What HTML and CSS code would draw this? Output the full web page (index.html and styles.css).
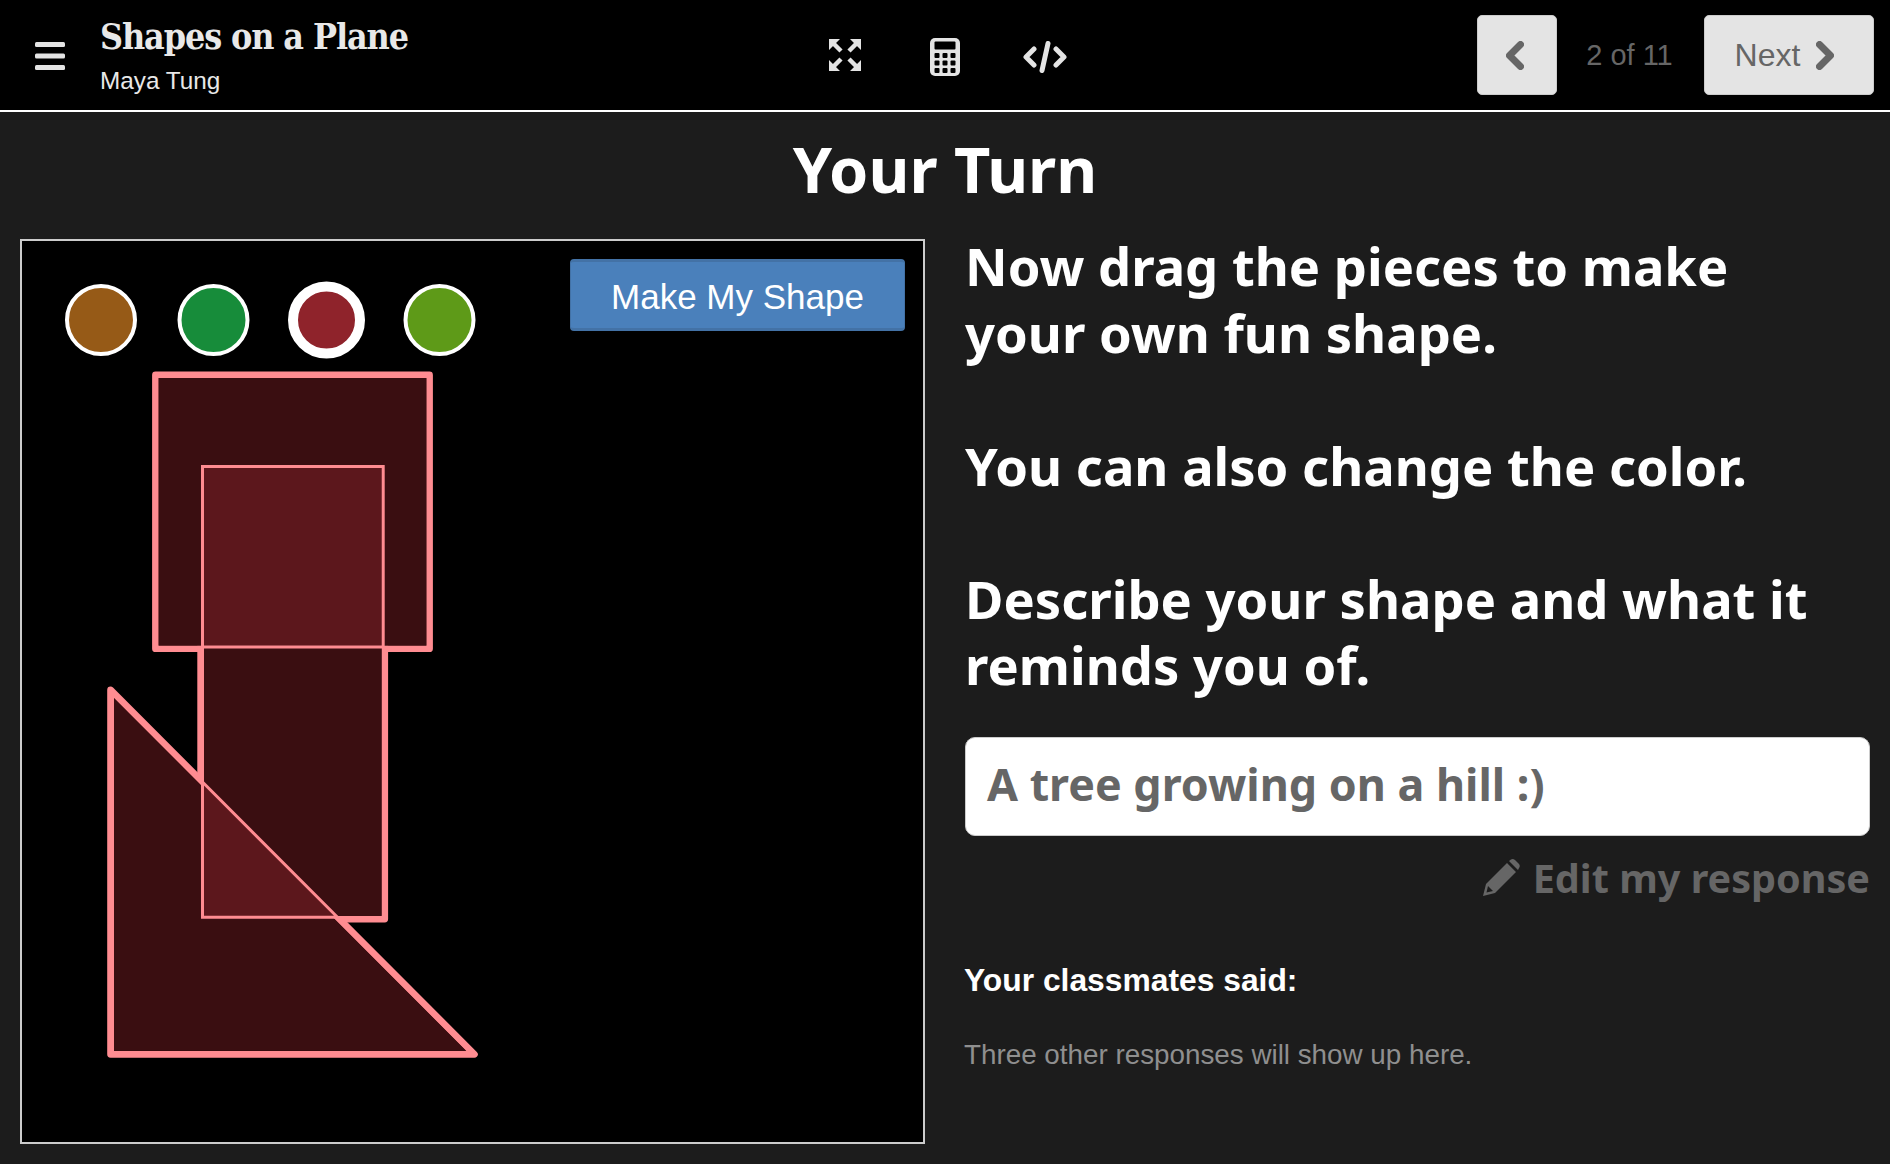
FILE: index.html
```html
<!DOCTYPE html>
<html lang="en">
<head>
    <meta charset="UTF-8">
    <meta name="viewport" content="width=device-width, initial-scale=1.0">
    <title>Shapes on a Plane</title>
    <link rel="stylesheet" href="styles.css">
</head>
<body>
    <header class="topbar">
        <div class="topbar-left">
            <svg class="menu-icon" viewBox="0 0 30 28"><rect y="0" width="30" height="5" rx="1.5"/><rect y="11.500" width="30" height="5" rx="1.5"/><rect y="23" width="30" height="5" rx="1.5"/></svg>
            <div class="lesson">
                <div class="lesson-title">Shapes on a Plane</div>
                <div class="lesson-student">Maya Tung</div>
            </div>
        </div>
        <div class="tools">
            <svg class="tool-expand" viewBox="0 0 32 32">
                <path d="M0 0H11L0 11ZM32 0H21L32 11ZM0 32H11L0 21ZM32 32H21L32 21Z"/>
                <path class="arrow-stem" d="M4 4L12 12M28 4L20 12M4 28L12 20M28 28L20 20"/>
            </svg>
            <svg class="tool-calc" viewBox="0 0 30 38">
                <rect width="30" height="38" rx="5"/>
                <g class="calc-holes">
                    <rect x="4.500" y="3.500" width="21" height="8" rx="1"/>
                    <rect x="4.500" y="15" width="5" height="5" rx="1"/><rect x="12.500" y="15" width="5" height="5" rx="1"/><rect x="20.500" y="15" width="5" height="5" rx="1"/>
                    <rect x="4.500" y="22.500" width="5" height="5" rx="1"/><rect x="12.500" y="22.500" width="5" height="5" rx="1"/><rect x="20.500" y="22.500" width="5" height="5" rx="1"/>
                    <rect x="4.500" y="30" width="5" height="5" rx="1"/><rect x="12.500" y="30" width="5" height="5" rx="1"/><rect x="20.500" y="30" width="5" height="5" rx="1"/>
                </g>
            </svg>
            <svg class="tool-code" viewBox="0 0 44 32"><path d="M11 8L3 16L11 24M33 8L41 16L33 24M25 2.500L19 29.500"/></svg>
        </div>
        <div class="pager">
            <button class="nav-btn prev-btn"><svg class="chevron" viewBox="0 0 18 29"><path d="M14.500 3.500L3.500 14.500L14.500 25.500"/></svg></button>
            <span class="pager-count">2 of 11</span>
            <button class="nav-btn next-btn">Next <svg class="chevron" viewBox="0 0 18 29"><path d="M3.500 3.500L14.500 14.500L3.500 25.500"/></svg></button>
        </div>
    </header>

    <h1 class="screen-title">Your Turn</h1>

    <main class="screen">
        <div class="sketch">
            <svg class="sketch-art" viewBox="0 0 901 901">
                <circle cx="79" cy="79" r="34" fill="#965a17" stroke="#fff" stroke-width="4"/>
                <circle cx="191.500" cy="79" r="34" fill="#178c3a" stroke="#fff" stroke-width="4"/>
                <circle cx="304.500" cy="79" r="33.500" fill="#8f232b" stroke="#fff" stroke-width="10"/>
                <circle cx="417.500" cy="79" r="34" fill="#5e9a18" stroke="#fff" stroke-width="4"/>

                <g class="piece">
                    <rect x="133.500" y="134" width="274" height="273.700"/>
                    <rect x="178.700" y="224" width="184" height="454"/>
                    <polygon points="88.600,449 452.400,813.300 88.600,813.300"/>
                </g>
                <g class="piece-cover">
                    <rect x="136.500" y="137" width="268" height="267.700"/>
                    <rect x="182" y="227" width="177.700" height="448"/>
                    <polygon points="92,457 444,809.800 92,809.800"/>
                </g>
                <g class="piece-overlap">
                    <rect x="182" y="227" width="177.700" height="177.700"/>
                    <polygon points="182,542.600 315,675 182,675"/>
                </g>
                <path class="piece-seam" d="M180.500 404.700V225.500H361.200V404.700M179 406H362.700M180.500 541V676.300H316M180 540.500L318 678.700"/>
            </svg>
            <button class="make-btn">Make My Shape</button>
        </div>

        <section class="prompt">
            <p class="prompt-text">Now drag the pieces to make<br>your own fun shape.<br><br>You can also change the color.<br><br>Describe your shape and what it<br>reminds you of.</p>
            <div class="answer">A tree growing on a hill :)</div>
            <div class="edit-link">
                <svg class="pencil" viewBox="0 0 37 37"><path d="M0 37L3 25L24 4L33 13L12 34ZM26 2L28 0.500Q30 -0.500 32 1L36 5Q37.500 7 36 9L35 11ZM5 27L3.500 33.500L10 32Z" fill-rule="evenodd"/></svg>
                Edit my response
            </div>
            <div class="classmates-label">Your classmates said:</div>
            <div class="classmates-note">Three other responses will show up here.</div>
        </section>
    </main>
</body>
</html>
```

FILE: styles.css
```css
body {
    margin: 0;
    height: 1164px;
    overflow: hidden;
    background-color: #1c1c1c;
    font-family: "Liberation Sans", Arial, sans-serif;
}

.topbar {
    display: grid;
    grid-template-columns: 1fr auto 1fr;
    align-items: center;
    height: 110px;
    padding: 0 16px 0 35px;
    background-color: #000;
    border-bottom: 2px solid #fff;
}

.topbar-left {
    display: flex;
    align-items: center;
    gap: 35px;
}

.menu-icon {
    flex: none;
    width: 30px;
    height: 28px;
    margin-top: 2px;
    fill: #e4e4e4;
}

.lesson {
    padding-top: 2px;
}

.lesson-title {
    font-family: "DejaVu Serif", serif;
    font-stretch: condensed;
    font-weight: bold;
    font-size: 35.500px;
    letter-spacing: -1.100px;
    line-height: 44px;
    color: #e8e8e8;
}

.lesson-student {
    margin-top: 6.500px;
    font-size: 24.300px;
    line-height: 32px;
    color: #e8e8e8;
}

.tools {
    display: flex;
    align-items: center;
    gap: 69px;
    margin-top: 4px;
    margin-left: -14px;
    fill: #e4e4e4;
}

.tool-expand {
    width: 32px;
    height: 32px;
    margin-bottom: 4px;
}

.arrow-stem {
    fill: none;
    stroke: #e4e4e4;
    stroke-width: 4.500;
}

.tool-calc {
    width: 30px;
    height: 38px;
}

.calc-holes {
    fill: #000;
}

.tool-code {
    width: 44px;
    height: 32px;
    margin-left: -6px;
    fill: none;
    stroke: #e4e4e4;
    stroke-width: 5;
    stroke-linecap: round;
    stroke-linejoin: round;
}

.pager {
    display: flex;
    justify-content: flex-end;
    align-items: center;
}

.nav-btn {
    display: flex;
    justify-content: center;
    align-items: center;
    height: 80px;
    padding: 0;
    background-color: #e4e4e4;
    border: 1px solid #ccc;
    border-radius: 5px;
    font-family: inherit;
    font-size: 32px;
    color: #666;
}

.prev-btn {
    width: 80px;
}

.prev-btn .chevron {
    margin-right: 4px;
}

.next-btn {
    width: 170px;
    padding-right: 9px;
    gap: 16px;
}

.chevron {
    width: 18px;
    height: 29px;
    fill: none;
    stroke: #666;
    stroke-width: 7;
    stroke-linecap: round;
    stroke-linejoin: round;
}

.pager-count {
    box-sizing: border-box;
    width: 147px;
    padding-right: 2px;
    text-align: center;
    font-size: 29px;
    color: #666;
}

.screen-title {
    margin: 0;
    height: 127px;
    text-align: center;
    font-family: "Noto Sans", sans-serif;
    font-weight: 700;
    font-size: 63px;
    line-height: 114px;
    color: #fff;
}

.screen {
    display: grid;
    grid-template-columns: 905px 905px;
    column-gap: 40px;
    padding-left: 20px;
}

.sketch {
    position: relative;
    width: 901px;
    height: 901px;
    background-color: #000;
    border: 2px solid #ccc;
}

.sketch-art {
    display: block;
    width: 901px;
    height: 901px;
}

.piece {
    fill: #3a0e11;
    stroke: #ff8c91;
    stroke-width: 6.800;
    stroke-linejoin: round;
}

.piece-cover {
    fill: #3a0e11;
}

.piece-overlap {
    fill: #5c171c;
}

.piece-seam {
    fill: none;
    stroke: #ff8c91;
    stroke-width: 3;
}

.make-btn {
    position: absolute;
    top: 18px;
    right: 18px;
    width: 335px;
    height: 72px;
    padding-top: 4px;
    background-color: #4a80bb;
    border: 1px solid #4372a6;
    border-top-width: 3px;
    border-bottom-width: 3px;
    border-radius: 4px;
    font-family: inherit;
    font-size: 35px;
    color: #fff;
}

.prompt {
    margin-top: -6px;
}

.prompt-text {
    margin: 0;
    font-family: "Noto Sans", sans-serif;
    font-weight: 700;
    font-size: 52.500px;
    line-height: 66.500px;
    color: #fff;
}

.answer {
    box-sizing: border-box;
    height: 99px;
    margin-top: 38px;
    padding-left: 21px;
    background-color: #fff;
    border: 1px solid #ccc;
    border-radius: 10px;
    font-family: "Noto Sans", sans-serif;
    font-weight: 700;
    font-size: 44.800px;
    line-height: 91px;
    color: #666;
}

.edit-link {
    display: flex;
    justify-content: flex-end;
    align-items: center;
    gap: 13px;
    height: 50px;
    margin-top: 17px;
    font-family: "Noto Sans", sans-serif;
    font-weight: 700;
    font-size: 39.600px;
    color: #666;
}

.pencil {
    width: 37px;
    height: 37px;
    fill: #666;
}

.classmates-label {
    margin-top: 57px;
    margin-left: -1px;
    font-weight: bold;
    font-size: 31.800px;
    line-height: 40px;
    color: #fff;
}

.classmates-note {
    margin-top: 35px;
    margin-left: -1px;
    font-size: 27.800px;
    line-height: 40px;
    color: #8f8f8f;
}
```
